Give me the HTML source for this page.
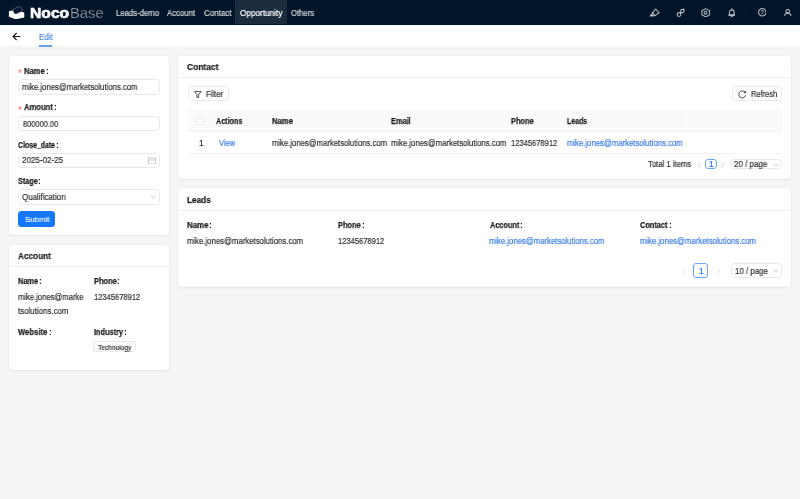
<!DOCTYPE html>
<html><head><meta charset="utf-8"><style>
html,body{margin:0;padding:0;}
body{width:800px;height:499px;position:relative;overflow:hidden;background:#f5f5f5;font-family:"Liberation Sans",sans-serif;}
.t{position:absolute;white-space:nowrap;line-height:12px;will-change:transform;transform-origin:0 0;}
.b{position:absolute;}
</style></head><body>
<div class="b" style="left:0px;top:0px;width:800.00px;height:25.30px;background:#001529;"></div>
<div class="b" style="left:235px;top:0px;width:52.00px;height:24.00px;background:rgba(255,255,255,.1);"></div>
<svg class="b" style="left:7px;top:4px" width="20" height="17" viewBox="0 0 20 17">
<path d="M2.5 6.9 L5.6 6.4 L16.5 8.3 Q17.3 8.5 17.3 9.3 L17.3 12.9 Q17.3 13.6 16.6 13.8 L12.2 14.5 L11 15 L8 14.9 L2.6 12.9 Q1.9 12.6 1.9 11.9 L1.9 7.7 Q1.9 7 2.5 6.9 Z" fill="#fff"/>
<g transform="rotate(-24 10.6 6.3)"><rect x="6.1" y="3.4" width="9" height="5.8" rx="2.4" fill="#051a2e" stroke="rgba(255,255,255,.32)" stroke-width="0.8"/></g>
</svg>
<div class="t" style="left:29.53px;top:6.80px;font-size:15px;transform:scaleX(1.0444);font-weight:bold;color:#fff;-webkit-text-stroke:0.6px #fff;">Noco</div>
<div class="t" style="left:69.86px;top:6.87px;font-size:14.8px;color:rgba(255,255,255,.72);-webkit-text-stroke:0.4px #001529;">Base</div>
<div class="t" style="left:115.63px;top:7.00px;font-size:8.6px;transform:scaleX(0.9020);-webkit-text-stroke:0.2px currentColor;color:rgba(255,255,255,.75);">Leads-demo</div>
<div class="t" style="left:167.45px;top:7.00px;font-size:8.6px;transform:scaleX(0.9031);-webkit-text-stroke:0.2px currentColor;color:rgba(255,255,255,.75);">Account</div>
<div class="t" style="left:203.75px;top:7.00px;font-size:8.6px;transform:scaleX(0.9261);-webkit-text-stroke:0.2px currentColor;color:rgba(255,255,255,.75);">Contact</div>
<div class="t" style="left:240.08px;top:7.00px;font-size:8.6px;transform:scaleX(0.9529);-webkit-text-stroke:0.2px currentColor;color:#fff;">Opportunity</div>
<div class="t" style="left:290.60px;top:7.00px;font-size:8.6px;transform:scaleX(0.8960);-webkit-text-stroke:0.2px currentColor;color:rgba(255,255,255,.75);">Others</div>
<div class="b" style="left:0px;top:25.3px;width:800.00px;height:20.70px;background:#fff;"></div>
<svg class="b" style="left:12px;top:31.5px" width="9" height="9" viewBox="0 0 9 9"><path d="M8.3 4.5 H1.2 M4.6 1 L1.1 4.5 L4.6 8" stroke="#1a1a1a" stroke-width="1.2" fill="none"/></svg>
<div class="t" style="left:38.81px;top:31.00px;font-size:9px;transform:scaleX(0.8835);-webkit-text-stroke:0.2px currentColor;color:#4a8bea;">Edit</div>
<div class="b" style="left:39px;top:45px;width:13.30px;height:1.60px;background:#6b9de8;"></div>
<div class="b" style="left:9px;top:56px;width:160.00px;height:179.00px;background:#fff;border-radius:3.5px;box-shadow:0 0 0 0.5px rgba(0,0,0,.03),0 1px 2.5px rgba(0,0,0,.05);"></div>
<div class="b" style="left:9px;top:244.5px;width:160.00px;height:125.50px;background:#fff;border-radius:3.5px;box-shadow:0 0 0 0.5px rgba(0,0,0,.03),0 1px 2.5px rgba(0,0,0,.05);"></div>
<div class="b" style="left:178px;top:56px;width:613.00px;height:122.75px;background:#fff;border-radius:3.5px;box-shadow:0 0 0 0.5px rgba(0,0,0,.03),0 1px 2.5px rgba(0,0,0,.05);"></div>
<div class="b" style="left:178px;top:187.5px;width:613.00px;height:99.50px;background:#fff;border-radius:3.5px;box-shadow:0 0 0 0.5px rgba(0,0,0,.03),0 1px 2.5px rgba(0,0,0,.05);"></div>
<div class="t" style="left:18.10px;top:68.00px;font-size:10px;color:#ff6b6d;">*</div>
<div class="t" style="left:23.96px;top:65.00px;font-size:8.5px;transform:scaleX(0.8947);font-weight:bold;-webkit-text-stroke:0.25px currentColor;color:rgba(0,0,0,.86);">Name</div>
<div class="t" style="left:45.94px;top:65.00px;font-size:8.5px;font-weight:bold;color:rgba(0,0,0,.86);">:</div>
<div class="b" style="left:17.6px;top:79.4px;width:142.40px;height:15.20px;background:#fff;border:1px solid #e9e9e9;border-radius:3.5px;box-sizing:border-box;"></div>
<div class="t" style="left:22.35px;top:81.00px;font-size:8.4px;transform:scaleX(0.9212);-webkit-text-stroke:0.2px currentColor;color:rgba(0,0,0,.8);">mike.jones@marketsolutions.com</div>
<div class="t" style="left:18.10px;top:105.00px;font-size:10px;color:#ff6b6d;">*</div>
<div class="t" style="left:24.26px;top:101.00px;font-size:8.5px;transform:scaleX(0.8965);font-weight:bold;-webkit-text-stroke:0.25px currentColor;color:rgba(0,0,0,.86);">Amount</div>
<div class="t" style="left:54.14px;top:101.00px;font-size:8.5px;font-weight:bold;color:rgba(0,0,0,.86);">:</div>
<div class="b" style="left:17.6px;top:116px;width:142.40px;height:15.30px;background:#fff;border:1px solid #e9e9e9;border-radius:3.5px;box-sizing:border-box;"></div>
<div class="t" style="left:22.65px;top:118.00px;font-size:8.4px;transform:scaleX(0.8884);-webkit-text-stroke:0.2px currentColor;color:rgba(0,0,0,.8);">800000.00</div>
<div class="t" style="left:18.17px;top:139.00px;font-size:8.5px;transform:scaleX(0.8156);font-weight:bold;-webkit-text-stroke:0.25px currentColor;color:rgba(0,0,0,.86);">Close_date</div>
<div class="t" style="left:55.64px;top:139.00px;font-size:8.5px;font-weight:bold;color:rgba(0,0,0,.86);">:</div>
<div class="b" style="left:17.6px;top:152.6px;width:142.40px;height:15.20px;background:#fff;border:1px solid #e9e9e9;border-radius:3.5px;box-sizing:border-box;"></div>
<div class="t" style="left:22.35px;top:154.00px;font-size:8.4px;transform:scaleX(0.9595);-webkit-text-stroke:0.2px currentColor;color:rgba(0,0,0,.8);">2025-02-25</div>
<svg class="b" style="left:148px;top:156.5px" width="8" height="7.5" viewBox="0 0 8 7.5"><rect x="0.5" y="1" width="7" height="6" fill="none" stroke="#c4c4c4" stroke-width="0.9"/><path d="M0.5 3 H7.5" stroke="#c4c4c4" stroke-width="0.9"/></svg>
<div class="t" style="left:18.43px;top:175.00px;font-size:8.5px;transform:scaleX(0.8536);font-weight:bold;-webkit-text-stroke:0.25px currentColor;color:rgba(0,0,0,.86);">Stage</div>
<div class="t" style="left:38.14px;top:175.00px;font-size:8.5px;font-weight:bold;color:rgba(0,0,0,.86);">:</div>
<div class="b" style="left:17.6px;top:189.3px;width:142.40px;height:15.60px;background:#fff;border:1px solid #e9e9e9;border-radius:3.5px;box-sizing:border-box;"></div>
<div class="t" style="left:22.29px;top:191.00px;font-size:8.4px;transform:scaleX(0.9466);-webkit-text-stroke:0.2px currentColor;color:rgba(0,0,0,.8);">Qualification</div>
<svg class="b" style="left:150px;top:194.5px" width="6" height="4" viewBox="0 0 6 4"><path d="M0.5 0.5 L3 3.2 L5.5 0.5" stroke="#c4c4c4" stroke-width="0.9" fill="none"/></svg>
<div class="b" style="left:18.1px;top:211.2px;width:37.15px;height:15.40px;background:#1677ff;border-radius:3.5px;"></div>
<div class="t" style="left:24.70px;top:214.00px;font-size:8.0px;transform:scaleX(0.9845);color:#fff;-webkit-text-stroke:0.1px #fff;">Submit</div>
<div class="t" style="left:18.44px;top:250.00px;font-size:9.2px;transform:scaleX(0.8948);font-weight:bold;-webkit-text-stroke:0.25px currentColor;color:rgba(0,0,0,.86);">Account</div>
<div class="b" style="left:9px;top:266px;width:160.00px;height:0.60px;background:#f0f0f0;"></div>
<div class="t" style="left:18.17px;top:275.00px;font-size:8.5px;transform:scaleX(0.8678);font-weight:bold;-webkit-text-stroke:0.25px currentColor;color:rgba(0,0,0,.86);">Name</div>
<div class="t" style="left:39.24px;top:275.00px;font-size:8.5px;font-weight:bold;color:rgba(0,0,0,.86);">:</div>
<div class="t" style="left:93.86px;top:275.00px;font-size:8.5px;transform:scaleX(0.8784);font-weight:bold;-webkit-text-stroke:0.25px currentColor;color:rgba(0,0,0,.86);">Phone</div>
<div class="t" style="left:116.84px;top:275.00px;font-size:8.5px;font-weight:bold;color:rgba(0,0,0,.86);">:</div>
<div class="t" style="left:17.95px;top:291.00px;font-size:8.4px;transform:scaleX(0.9113);-webkit-text-stroke:0.2px currentColor;color:rgba(0,0,0,.8);">mike.jones@marke</div>
<div class="t" style="left:17.93px;top:305.00px;font-size:8.4px;transform:scaleX(0.9426);-webkit-text-stroke:0.2px currentColor;color:rgba(0,0,0,.8);">tsolutions.com</div>
<div class="t" style="left:93.78px;top:291.00px;font-size:8.4px;transform:scaleX(0.9003);-webkit-text-stroke:0.2px currentColor;color:rgba(0,0,0,.8);">12345678912</div>
<div class="t" style="left:18.45px;top:326.00px;font-size:8.5px;transform:scaleX(0.9014);font-weight:bold;-webkit-text-stroke:0.25px currentColor;color:rgba(0,0,0,.86);">Website</div>
<div class="t" style="left:48.64px;top:326.00px;font-size:8.5px;font-weight:bold;color:rgba(0,0,0,.86);">:</div>
<div class="t" style="left:93.87px;top:326.00px;font-size:8.5px;transform:scaleX(0.8653);font-weight:bold;-webkit-text-stroke:0.25px currentColor;color:rgba(0,0,0,.86);">Industry</div>
<div class="t" style="left:123.64px;top:326.00px;font-size:8.5px;font-weight:bold;color:rgba(0,0,0,.86);">:</div>
<div class="b" style="left:93.4px;top:341px;width:42.20px;height:11.20px;background:#fafafa;border:1px solid #e9e9e9;border-radius:2px;box-sizing:border-box;"></div>
<div class="t" style="left:98.42px;top:342.00px;font-size:7.3px;transform:scaleX(0.8997);-webkit-text-stroke:0.2px currentColor;color:rgba(0,0,0,.8);">Technology</div>
<div class="t" style="left:187.11px;top:61.00px;font-size:9.2px;transform:scaleX(0.9181);font-weight:bold;-webkit-text-stroke:0.25px currentColor;color:rgba(0,0,0,.86);">Contact</div>
<div class="b" style="left:178px;top:77px;width:613.00px;height:0.60px;background:#f0f0f0;"></div>
<div class="b" style="left:187.5px;top:86.2px;width:41.50px;height:15.30px;background:#fff;border:1px solid #e9e9e9;border-radius:3.5px;box-sizing:border-box;"></div>
<svg class="b" style="left:193.5px;top:90.5px" width="8" height="7" viewBox="0 0 8 7"><path d="M0.6 0.6 H7.2 L4.7 3.4 V6.4 H2.9 V3.4 Z" fill="none" stroke="#333" stroke-width="0.85" stroke-linejoin="round"/></svg>
<div class="t" style="left:205.83px;top:88.00px;font-size:8.4px;transform:scaleX(0.9222);-webkit-text-stroke:0.2px currentColor;color:rgba(0,0,0,.8);">Filter</div>
<div class="b" style="left:731.6px;top:86px;width:50.40px;height:15.20px;background:#fff;border:1px solid #e9e9e9;border-radius:3.5px;box-sizing:border-box;"></div>
<svg class="b" style="left:737.5px;top:89.5px" width="9" height="9" viewBox="0 0 9 9"><path d="M6.5 1.7 A3.5 3.5 0 1 0 7.7 5.2" fill="none" stroke="#3a3a3a" stroke-width="0.9"/><path d="M7.9 0.6 L7.9 3.2 L5.3 2.9 Z" fill="#3a3a3a"/></svg>
<div class="t" style="left:750.65px;top:88.00px;font-size:8.4px;transform:scaleX(0.8929);-webkit-text-stroke:0.2px currentColor;color:rgba(0,0,0,.8);">Refresh</div>
<div class="b" style="left:187.5px;top:110px;width:594.50px;height:20.80px;background:#fafafa;"></div>
<div class="b" style="left:187.5px;top:130.6px;width:594.50px;height:0.60px;background:#f2f2f2;"></div>
<div class="b" style="left:682px;top:114px;width:0.60px;height:13.00px;background:rgba(0,0,0,.02);"></div>
<div class="b" style="left:196.2px;top:118.3px;width:7.60px;height:7.10px;background:#fff;border:1px solid #ececec;border-radius:1.5px;box-sizing:border-box;"></div>
<div class="t" style="left:216.37px;top:115.00px;font-size:8.5px;transform:scaleX(0.8464);font-weight:bold;-webkit-text-stroke:0.25px currentColor;color:rgba(0,0,0,.86);">Actions</div>
<div class="t" style="left:271.75px;top:115.00px;font-size:8.5px;transform:scaleX(0.9036);font-weight:bold;-webkit-text-stroke:0.25px currentColor;color:rgba(0,0,0,.86);">Name</div>
<div class="t" style="left:391.27px;top:115.00px;font-size:8.5px;transform:scaleX(0.8679);font-weight:bold;-webkit-text-stroke:0.25px currentColor;color:rgba(0,0,0,.86);">Email</div>
<div class="t" style="left:511.17px;top:115.00px;font-size:8.5px;transform:scaleX(0.8744);font-weight:bold;-webkit-text-stroke:0.25px currentColor;color:rgba(0,0,0,.86);">Phone</div>
<div class="t" style="left:566.75px;top:115.00px;font-size:8.5px;transform:scaleX(0.8174);font-weight:bold;-webkit-text-stroke:0.25px currentColor;color:rgba(0,0,0,.86);">Leads</div>
<div class="t" style="left:198.82px;top:137.00px;font-size:8.4px;-webkit-text-stroke:0.2px currentColor;color:rgba(0,0,0,.8);">1</div>
<div class="t" style="left:218.61px;top:137.00px;font-size:8.4px;transform:scaleX(0.8936);-webkit-text-stroke:0.2px currentColor;color:#3b7ee6;">View</div>
<div class="t" style="left:271.75px;top:137.00px;font-size:8.4px;transform:scaleX(0.9180);-webkit-text-stroke:0.2px currentColor;color:rgba(0,0,0,.8);">mike.jones@marketsolutions.com</div>
<div class="t" style="left:391.25px;top:137.00px;font-size:8.4px;transform:scaleX(0.9204);-webkit-text-stroke:0.2px currentColor;color:rgba(0,0,0,.8);">mike.jones@marketsolutions.com</div>
<div class="t" style="left:511.08px;top:137.00px;font-size:8.4px;transform:scaleX(0.9023);-webkit-text-stroke:0.2px currentColor;color:rgba(0,0,0,.8);">12345678912</div>
<div class="t" style="left:566.55px;top:137.00px;font-size:8.4px;transform:scaleX(0.9228);-webkit-text-stroke:0.2px currentColor;color:#3b7ee6;">mike.jones@marketsolutions.com</div>
<div class="b" style="left:187.5px;top:152.8px;width:594.50px;height:0.60px;background:#f2f2f2;"></div>
<div class="t" style="left:648.00px;top:158.00px;font-size:8.4px;transform:scaleX(0.9186);-webkit-text-stroke:0.2px currentColor;color:rgba(0,0,0,.8);">Total 1 items</div>
<svg class="b" style="left:696.5px;top:162px" width="5" height="6" viewBox="0 0 5 6"><path d="M3.8 0.5 L1.2 3 L3.8 5.5" stroke="#c8c8c8" stroke-width="0.8" fill="none"/></svg>
<div class="b" style="left:704.75px;top:158.9px;width:11.75px;height:10.60px;background:#fff;border:1px solid #6ea4f3;border-radius:3px;box-sizing:border-box;"></div>
<div class="t" style="left:708.82px;top:158.00px;font-size:8.4px;-webkit-text-stroke:0.2px currentColor;color:#1677ff;">1</div>
<svg class="b" style="left:720.2px;top:162px" width="5" height="6" viewBox="0 0 5 6"><path d="M1.2 0.5 L3.8 3 L1.2 5.5" stroke="#c8c8c8" stroke-width="0.8" fill="none"/></svg>
<div class="b" style="left:729.75px;top:158.9px;width:52.50px;height:10.60px;background:#fff;border:1px solid #e9e9e9;border-radius:3.5px;box-sizing:border-box;"></div>
<div class="t" style="left:733.55px;top:158.00px;font-size:8.4px;transform:scaleX(0.9541);-webkit-text-stroke:0.2px currentColor;color:rgba(0,0,0,.8);">20 / page</div>
<svg class="b" style="left:772.5px;top:162.8px" width="6" height="4" viewBox="0 0 6 4"><path d="M0.5 0.5 L3 3.2 L5.5 0.5" stroke="#c8c8c8" stroke-width="0.9" fill="none"/></svg>
<div class="t" style="left:186.72px;top:194.00px;font-size:9.2px;transform:scaleX(0.8938);font-weight:bold;-webkit-text-stroke:0.25px currentColor;color:rgba(0,0,0,.86);">Leads</div>
<div class="b" style="left:178px;top:209.8px;width:613.00px;height:0.60px;background:#f0f0f0;"></div>
<div class="t" style="left:186.94px;top:219.00px;font-size:8.5px;transform:scaleX(0.9260);font-weight:bold;-webkit-text-stroke:0.25px currentColor;color:rgba(0,0,0,.86);">Name</div>
<div class="t" style="left:208.94px;top:219.00px;font-size:8.5px;font-weight:bold;color:rgba(0,0,0,.86);">:</div>
<div class="t" style="left:338.47px;top:219.00px;font-size:8.5px;transform:scaleX(0.8744);font-weight:bold;-webkit-text-stroke:0.25px currentColor;color:rgba(0,0,0,.86);">Phone</div>
<div class="t" style="left:361.64px;top:219.00px;font-size:8.5px;font-weight:bold;color:rgba(0,0,0,.86);">:</div>
<div class="t" style="left:489.52px;top:219.00px;font-size:8.5px;transform:scaleX(0.8616);font-weight:bold;-webkit-text-stroke:0.25px currentColor;color:rgba(0,0,0,.86);">Account</div>
<div class="t" style="left:519.64px;top:219.00px;font-size:8.5px;font-weight:bold;color:rgba(0,0,0,.86);">:</div>
<div class="t" style="left:640.41px;top:219.00px;font-size:8.5px;transform:scaleX(0.8655);font-weight:bold;-webkit-text-stroke:0.25px currentColor;color:rgba(0,0,0,.86);">Contact</div>
<div class="t" style="left:668.64px;top:219.00px;font-size:8.5px;font-weight:bold;color:rgba(0,0,0,.86);">:</div>
<div class="t" style="left:186.94px;top:235.00px;font-size:8.4px;transform:scaleX(0.9261);-webkit-text-stroke:0.2px currentColor;color:rgba(0,0,0,.8);">mike.jones@marketsolutions.com</div>
<div class="t" style="left:338.08px;top:235.00px;font-size:8.4px;transform:scaleX(0.9023);-webkit-text-stroke:0.2px currentColor;color:rgba(0,0,0,.8);">12345678912</div>
<div class="t" style="left:489.15px;top:235.00px;font-size:8.4px;transform:scaleX(0.9212);-webkit-text-stroke:0.2px currentColor;color:#3b7ee6;">mike.jones@marketsolutions.com</div>
<div class="t" style="left:640.24px;top:235.00px;font-size:8.4px;transform:scaleX(0.9253);-webkit-text-stroke:0.2px currentColor;color:#3b7ee6;">mike.jones@marketsolutions.com</div>
<svg class="b" style="left:681px;top:268px" width="5" height="6" viewBox="0 0 5 6"><path d="M3.8 0.5 L1.2 3 L3.8 5.5" stroke="#d6d6d6" stroke-width="0.8" fill="none"/></svg>
<div class="b" style="left:693px;top:263px;width:15.30px;height:15.10px;background:#fff;border:1px solid #6ea4f3;border-radius:3px;box-sizing:border-box;"></div>
<div class="t" style="left:699.22px;top:265.00px;font-size:8.4px;-webkit-text-stroke:0.2px currentColor;color:#1677ff;">1</div>
<svg class="b" style="left:716.2px;top:268px" width="5" height="6" viewBox="0 0 5 6"><path d="M1.2 0.5 L3.8 3 L1.2 5.5" stroke="#d6d6d6" stroke-width="0.8" fill="none"/></svg>
<div class="b" style="left:730.7px;top:263px;width:51.30px;height:15.10px;background:#fff;border:1px solid #e9e9e9;border-radius:3.5px;box-sizing:border-box;"></div>
<div class="t" style="left:735.46px;top:265.00px;font-size:8.4px;transform:scaleX(0.9424);-webkit-text-stroke:0.2px currentColor;color:rgba(0,0,0,.8);">10 / page</div>
<svg class="b" style="left:772.5px;top:269.2px" width="6" height="4" viewBox="0 0 6 4"><path d="M0.5 0.5 L3 3.2 L5.5 0.5" stroke="#c8c8c8" stroke-width="0.9" fill="none"/></svg>
<svg class="b" style="left:649px;top:8px" width="11" height="9" viewBox="0 0 11 9"><path d="M1.2 8.1 L3.6 4.6 L6.7 1 L10.1 4.8 L7.3 6.6 L6 7.7 Z" fill="none" stroke="rgba(255,255,255,.7)" stroke-width="1.05" stroke-linejoin="round"/><path d="M3.6 4.6 L6 7.7" stroke="rgba(255,255,255,.7)" stroke-width="1.05"/><path d="M1.2 8.1 L3.8 6.6 L5.1 7.9 Z" fill="rgba(255,255,255,.7)"/></svg>
<svg class="b" style="left:675.5px;top:7.5px" width="9.5" height="9.5" viewBox="0 0 9.5 9.5"><circle cx="3" cy="6.5" r="1.9" fill="none" stroke="rgba(255,255,255,.7)" stroke-width="1.05"/><circle cx="6.3" cy="3.1" r="1.75" fill="none" stroke="rgba(255,255,255,.7)" stroke-width="1.05"/><path d="M4.3 5.2 L5 4.5 M7.5 1.9 L8.3 0.8" stroke="rgba(255,255,255,.7)" stroke-width="1.05"/></svg>
<svg class="b" style="left:701.3px;top:7.6px" width="9.4" height="9.6" viewBox="0 0 9.4 9.6"><path d="M4.7 0.6 L8.6 2.8 V6.8 L4.7 9 L0.8 6.8 V2.8 Z" fill="none" stroke="rgba(255,255,255,.7)" stroke-width="1.05" stroke-linejoin="round"/><circle cx="4.5" cy="4.7" r="1.45" fill="none" stroke="rgba(255,255,255,.7)" stroke-width="1.05"/></svg>
<svg class="b" style="left:727.8px;top:8px" width="7.5" height="9" viewBox="0 0 7.5 9"><path d="M1.4 7 V4.2 A2.35 2.35 0 0 1 6.1 4.2 V7 Z" fill="none" stroke="rgba(255,255,255,.7)" stroke-width="1.05"/><path d="M0.3 7.1 H7.2 M2.8 8.4 H4.7 M3.75 0.4 V1.7" fill="none" stroke="rgba(255,255,255,.7)" stroke-width="1.05"/></svg>
<div class="b" style="left:746.3px;top:9px;width:0.70px;height:7.00px;background:rgba(255,255,255,.035);"></div>
<svg class="b" style="left:757.8px;top:8.4px" width="8.6" height="8.6" viewBox="0 0 8.6 8.6"><circle cx="4.3" cy="4.3" r="3.75" fill="none" stroke="rgba(255,255,255,.7)" stroke-width="1.05"/><path d="M3.1 3.5 A1.2 1.15 0 1 1 4.5 4.6 L4 6.3" fill="none" stroke="rgba(255,255,255,.7)" stroke-width="0.85"/></svg>
<svg class="b" style="left:784px;top:9px" width="7.5" height="7.2" viewBox="0 0 7.5 7.2"><circle cx="3.75" cy="2.3" r="1.85" fill="none" stroke="rgba(255,255,255,.7)" stroke-width="1.05"/><path d="M0.5 6.9 Q1 4.3 3.75 4.3 Q6.5 4.3 7 6.9" fill="none" stroke="rgba(255,255,255,.7)" stroke-width="1.05"/></svg>
</body></html>
